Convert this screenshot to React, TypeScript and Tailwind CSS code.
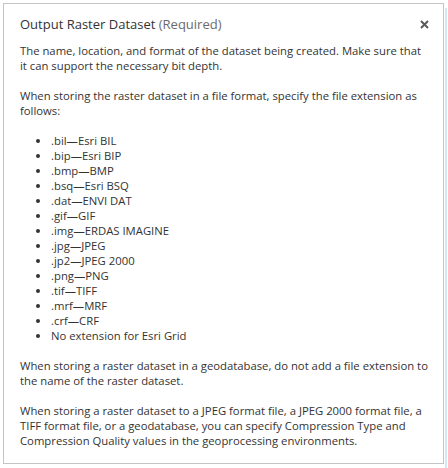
const formats = [
  [".bil", "Esri BIL"],
  [".bip", "Esri BIP"],
  [".bmp", "BMP"],
  [".bsq", "Esri BSQ"],
  [".dat", "ENVI DAT"],
  [".gif", "GIF"],
  [".img", "ERDAS IMAGINE"],
  [".jpg", "JPEG"],
  [".jp2", "JPEG 2000"],
  [".png", "PNG"],
  [".tif", "TIFF"],
  [".mrf", "MRF"],
  [".crf", "CRF"],
];

const Lines = ({ lines }: { lines: string[] }) => (
  <p className="whitespace-nowrap">
    {lines.map((line, i) => (
      <span key={i} className="block">
        {line}
      </span>
    ))}
  </p>
);

const App = () => {
  return (
    <div className="flex w-[448px] h-[468px] bg-white pt-[3px] pl-[3px] font-['Open_Sans',sans-serif]">
      <div className="flex flex-col w-[441px] h-[461px] border border-[#c4c4c4] bg-white px-[16px] pt-[9px] text-[11.3px] leading-[15px] text-[#333333]">
        <div className="flex items-center justify-between h-[22px]">
          <h2 className="text-[13px] text-[#333333]">
            Output Raster Dataset <span className="text-[#6b6b6b]">(Required)</span>
          </h2>
          <button className="flex items-center justify-center w-[14px] h-[14px] mr-[-4px]">
            <svg width="9" height="9" viewBox="0 0 9 9">
              <path d="M1 1L8 8M8 1L1 8" stroke="#5a5a5a" strokeWidth="2" />
            </svg>
          </button>
        </div>

        <div className="flex flex-col gap-[15px] mt-[8px]">
          <Lines
            lines={[
              "The name, location, and format of the dataset being created. Make sure that",
              "it can support the necessary bit depth.",
            ]}
          />
          <Lines
            lines={[
              "When storing the raster dataset in a file format, specify the file extension as",
              "follows:",
            ]}
          />
          <ul className="list-disc pl-[31px]">
            {formats.map(([ext, name]) => (
              <li key={ext}>
                {ext}—{name}
              </li>
            ))}
            <li>No extension for Esri Grid</li>
          </ul>
          <Lines
            lines={[
              "When storing a raster dataset in a geodatabase, do not add a file extension to",
              "the name of the raster dataset.",
            ]}
          />
          <Lines
            lines={[
              "When storing a raster dataset to a JPEG format file, a JPEG 2000 format file, a",
              "TIFF format file, or a geodatabase, you can specify Compression Type and",
              "Compression Quality values in the geoprocessing environments.",
            ]}
          />
        </div>
      </div>
      <div className="w-[2px] h-full ml-[1px] mt-[5px] bg-[#d6e6f2]" />
    </div>
  );
};

export default App;
